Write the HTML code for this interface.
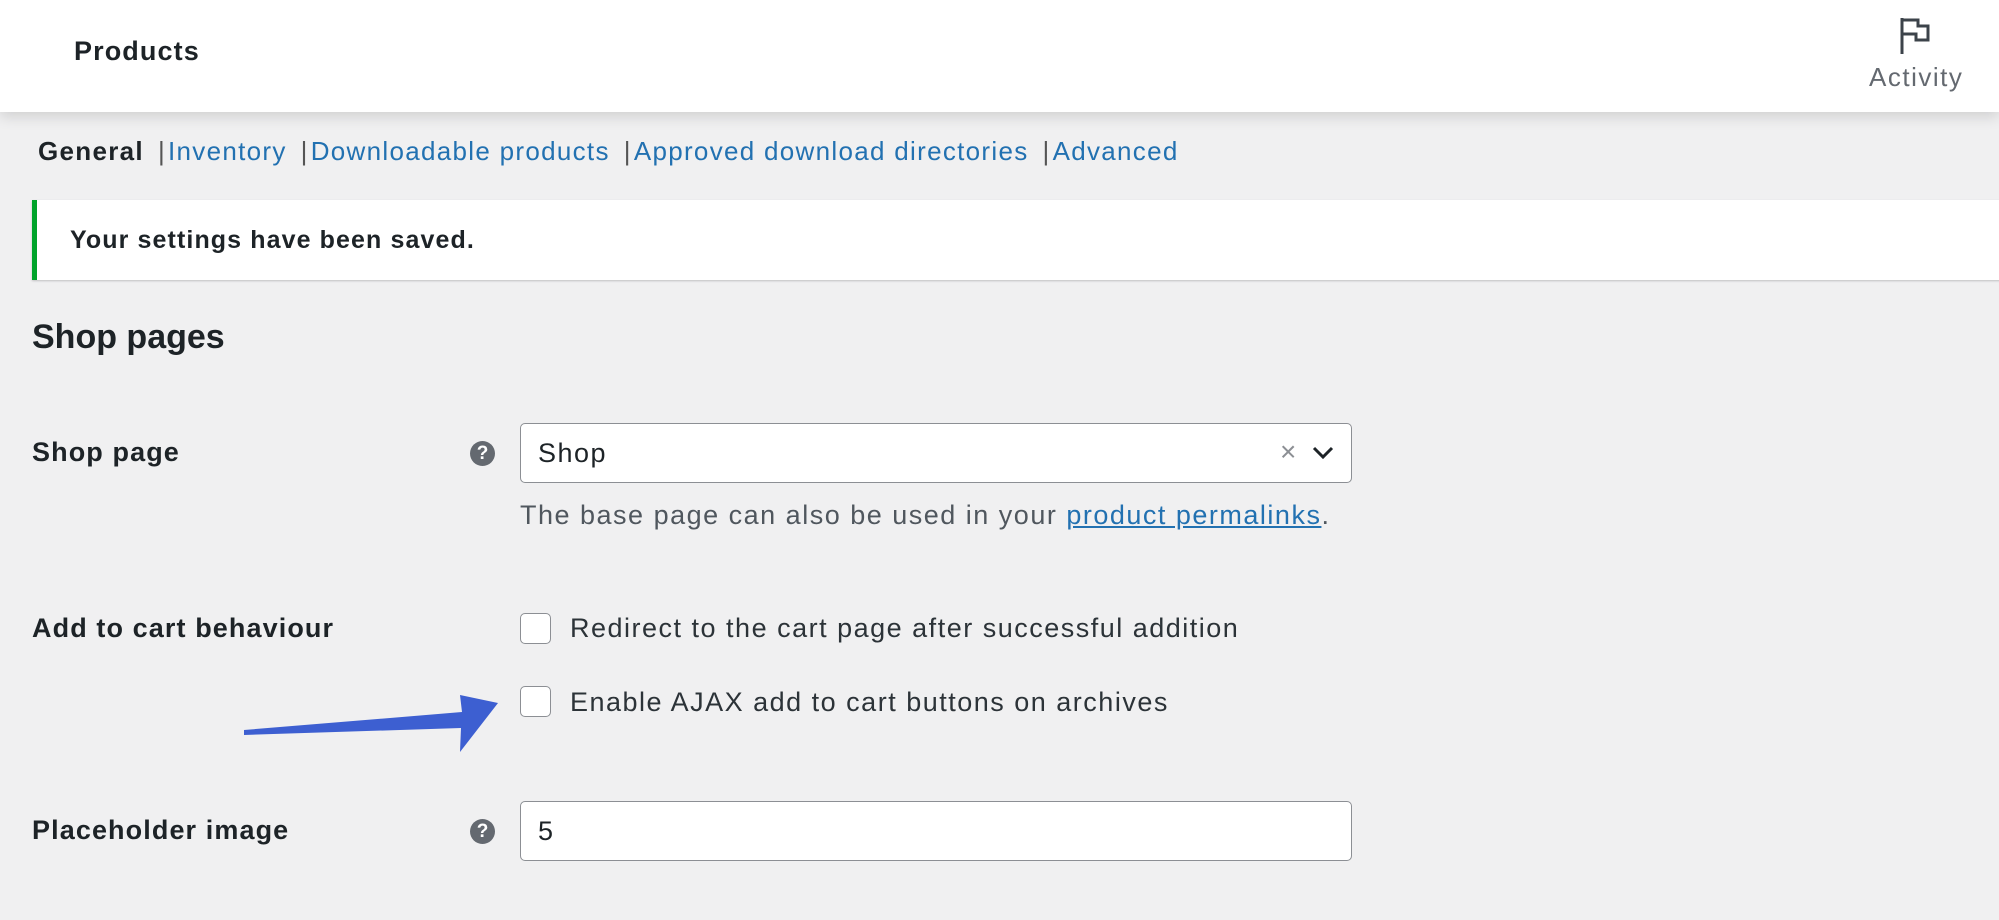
<!DOCTYPE html>
<html><head><meta charset="utf-8"><style>
body{margin:0;width:1999px;height:920px;background:#f0f0f1;font-family:"Liberation Sans",sans-serif;position:relative;overflow:hidden;color:#1d2327}
.a{position:absolute;white-space:nowrap}
.hdr{position:absolute;left:0;top:0;width:1999px;height:112px;background:#fff;box-shadow:0 4px 14px rgba(0,0,0,.15)}
.tabs{left:38px;top:136px;font-size:26px;color:#2271b1;letter-spacing:1.3px}
.tabs b{color:#1d2327;font-weight:700}
.tabs span{color:#555;margin:0 2px 0 14px}
.notice{position:absolute;left:32px;top:200px;width:1980px;height:80px;background:#fff;border-left:5px solid #00a32a;box-shadow:0 1px 2px rgba(0,0,0,.2)}
.lbl{font-size:27px;font-weight:700;color:#1d2327;letter-spacing:1.1px}
.help{position:absolute;width:25px;height:25px;border-radius:50%;background:#646970;color:#fff;font-size:19px;font-weight:700;text-align:center;line-height:25px}
.box{position:absolute;left:520px;width:830px;height:58px;background:#fff;border:1.5px solid #8c8f94;border-radius:5px}
.cb{position:absolute;left:520px;width:29px;height:29px;border:1.5px solid #8c8f94;border-radius:5px;background:#fff}
.txt{font-size:27px;color:#2c3338;letter-spacing:1.5px}
</style></head><body>
<div class="hdr"></div>
<div class="a" style="left:74px;top:36px;font-size:27px;font-weight:700;letter-spacing:1.1px">Products</div>
<svg class="a" style="left:1896px;top:16px" width="40" height="40" viewBox="0 0 40 40"><path d="M6 2V38M6 4H22V10H32V24H20V18H6" fill="none" stroke="#3c434a" stroke-width="3"/></svg>
<div class="a" style="left:1869px;top:62px;font-size:26px;color:#646970;letter-spacing:1.5px">Activity</div>
<div class="a tabs"><b>General</b><span>|</span>Inventory<span>|</span>Downloadable products<span>|</span>Approved download directories<span>|</span>Advanced</div>
<div class="notice"></div>
<div class="a" style="left:70px;top:226px;font-size:25px;font-weight:700;color:#1d2327;letter-spacing:1.1px">Your settings have been saved.</div>
<div class="a" style="left:32px;top:318px;font-size:34px;font-weight:700">Shop pages</div>
<div class="a lbl" style="left:32px;top:437px">Shop page</div>
<div class="help" style="left:470px;top:441px">?</div>
<div class="box" style="top:423px"></div>
<div class="a txt" style="left:538px;top:438px;color:#1d2327">Shop</div>
<div class="a" style="left:1280px;top:436px;font-size:28px;color:#8c8f94">×</div>
<svg class="a" style="left:1312px;top:445px" width="22" height="16" viewBox="0 0 22 16"><path d="M2 3L11 12L20 3" fill="none" stroke="#1d2327" stroke-width="3"/></svg>
<div class="a txt" style="left:520px;top:500px;color:#50575e">The base page can also be used in your <span style="color:#2271b1;text-decoration:underline">product permalinks</span>.</div>
<div class="a lbl" style="left:32px;top:613px">Add to cart behaviour</div>
<div class="cb" style="top:613px"></div>
<div class="a txt" style="left:570px;top:613px">Redirect to the cart page after successful addition</div>
<div class="cb" style="top:686px"></div>
<div class="a txt" style="left:570px;top:687px">Enable AJAX add to cart buttons on archives</div>
<svg class="a" style="left:0;top:0" width="600" height="800"><path d="M244 730L462 712L460 695L498 703L460 752L461 728L244 735Z" fill="#3d5fd1"/></svg>
<div class="a lbl" style="left:32px;top:815px">Placeholder image</div>
<div class="help" style="left:470px;top:819px">?</div>
<div class="box" style="top:801px"></div>
<div class="a txt" style="left:538px;top:816px;color:#1d2327">5</div>
</body></html>
